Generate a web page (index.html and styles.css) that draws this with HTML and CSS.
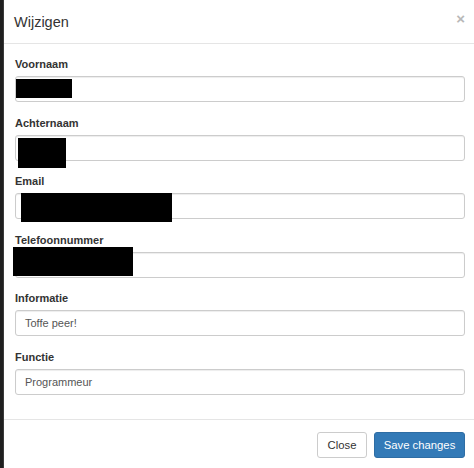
FILE: index.html
```html
<!DOCTYPE html>
<html lang="nl">
<head>
<meta charset="utf-8">
<title>Wijzigen</title>
<link rel="stylesheet" href="styles.css">
</head>
<body>
<div class="modal">
  <div class="modal-header">
    <h4 class="modal-title">Wijzigen</h4>
    <span class="close">&times;</span>
  </div>
  <div class="modal-body">
    <div class="form-group">
      <label>Voornaam</label>
      <div class="field">
        <div class="input"></div>
        <div class="redact r1"></div>
      </div>
    </div>
    <div class="form-group">
      <label>Achternaam</label>
      <div class="field">
        <div class="input"></div>
        <div class="redact r2"></div>
      </div>
    </div>
    <div class="form-group">
      <label>Email</label>
      <div class="field">
        <div class="input"></div>
        <div class="redact r3"></div>
      </div>
    </div>
    <div class="form-group">
      <label>Telefoonnummer</label>
      <div class="field">
        <div class="input"></div>
        <div class="redact r4"></div>
      </div>
    </div>
    <div class="form-group">
      <label>Informatie</label>
      <div class="field">
        <div class="input">Toffe peer!</div>
      </div>
    </div>
    <div class="form-group">
      <label>Functie</label>
      <div class="field">
        <div class="input">Programmeur</div>
      </div>
    </div>
  </div>
  <div class="modal-footer">
    <button class="btn btn-default">Close</button>
    <button class="btn btn-primary">Save changes</button>
  </div>
</div>
</body>
</html>
```
FILE: styles.css
```css
html, body {
  margin: 0;
  padding: 0;
  height: 100%;
  overflow: hidden;
}
body {
  background: #1f1f1f;
  font-family: "Liberation Sans", Arial, sans-serif;
  font-size: 11px;
  color: #333;
}
.modal {
  margin-left: 3px;
  width: 473px;
  height: 100%;
  background: #fff;
  box-sizing: border-box;
  border-left: 1px solid #3a3a3a;
}
.modal-header {
  height: 43px;
  border-bottom: 1px solid #e5e5e5;
  display: flex;
  align-items: center;
  justify-content: space-between;
  padding: 0 11px 0 10px;
  box-sizing: content-box;
}
.modal-title {
  margin: 0;
  font-size: 14.5px;
  font-weight: normal;
  color: #333;
  line-height: 20px;
}
.close {
  font-size: 15px;
  font-weight: bold;
  color: #b8b8b8;
  line-height: 1;
  margin-top: -7px;
}
.modal-body {
  padding: 12px 11px 12px 11px;
}
.form-group {
  margin-bottom: 12.5px;
}
.form-group label {
  display: block;
  font-weight: bold;
  font-size: 11px;
  line-height: 16px;
  height: 16px;
  margin-bottom: 4px;
  color: #333;
}
.field {
  position: relative;
}
.input {
  height: 26px;
  box-sizing: border-box;
  border: 1px solid #ccc;
  border-radius: 3px;
  box-shadow: inset 0 1px 1px rgba(0,0,0,.075);
  padding: 0 9px;
  line-height: 24px;
  color: #555;
  font-size: 11px;
  background: #fff;
}
.redact {
  position: absolute;
  background: #000;
}
.r1 { left: 1px; top: 3px; width: 56px; height: 19px; }
.r2 { left: 3px; top: 3px; width: 48px; height: 30px; }
.r3 { left: 6px; top: 0; width: 151px; height: 29px; }
.r4 { left: -2px; top: -5px; width: 120px; height: 29px; }
.modal-footer {
  border-top: 1px solid #e5e5e5;
  padding: 12px 11px 0 11px;
  display: flex;
  justify-content: flex-end;
  gap: 7px;
}
.btn {
  height: 26px;
  box-sizing: border-box;
  border-radius: 3px;
  font-family: "Liberation Sans", Arial, sans-serif;
  font-size: 11.3px;
  padding: 0 6px;
  border: 1px solid #ccc;
  margin: 0;
}
.btn-default {
  background: #fff;
  color: #333;
  width: 50px;
}
.btn-primary {
  background: #337ab7;
  border-color: #2e6da4;
  color: #fff;
  width: 91px;
}
```
